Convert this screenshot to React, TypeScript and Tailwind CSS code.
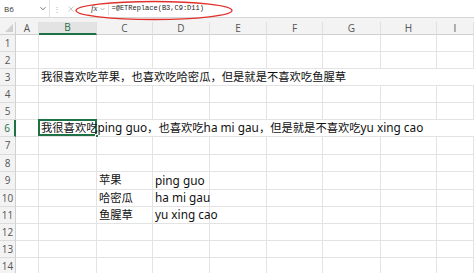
const cols = ['A', 'B', 'C', 'D', 'E', 'F', 'G', 'H', 'I'];
const rowHeights = ['h-[17px]', 'h-[17px]', 'h-[17px]', 'h-[17px]', 'h-[17px]', 'h-[17px]', 'h-[18px]', 'h-[17px]', 'h-[18px]', 'h-[17px]', 'h-[17px]', 'h-[17px]', 'h-[17px]', 'h-[17px]'];

const cjk = { fontFamily: '"Noto Sans", "Noto Sans CJK SC", sans-serif' };

const lookup: Record<number, [string, string]> = {
  9: ['苹果', 'ping guo'],
  10: ['哈密瓜', 'ha mi gau'],
  11: ['鱼腥草', 'yu xing cao'],
};

function Lat({ children }: { children: React.ReactNode }) {
  return <span className="text-[11.8px]">{children}</span>;
}

function RowHead({ n, h }: { n: number; h: string }) {
  const active = n === 6;
  return (
    <div
      className={`${h} flex items-center justify-center bg-[#f3f3f3] text-[10px] border-b border-[#dcdcdc] ${
        active ? 'text-[#1e7145] border-r-2 border-r-[#1e7145] bg-[#e3e3e3]' : 'text-[#555] border-r border-r-[#d0d0d0]'
      }`}
      style={{ fontFamily: '"Open Sans", "Noto Sans", sans-serif' }}
    >
      {n}
    </div>
  );
}

function Cell({ h, children, className = '' }: { h: string; children?: React.ReactNode; className?: string }) {
  return (
    <div className={`${h} border-r border-b border-[#e3e3e3] flex items-center pl-[2px] whitespace-nowrap text-[11.3px] text-[#111] ${className}`} style={cjk}>
      {children}
    </div>
  );
}

export default function App() {
  return (
    <div className="w-[474px] h-[273px] overflow-hidden bg-white relative">
      {/* formula bar */}
      <div className="h-[18px] flex items-center bg-white border-b border-[#d6d6d6]">
        <div className="w-[50px] h-full flex items-center justify-between pl-[4px] pr-[3px] border-r border-[#e0e0e0]">
          <span className="text-[8px] text-[#333]" style={{ fontFamily: '"Open Sans", sans-serif' }}>B6</span>
          <svg width="6" height="5" viewBox="0 0 6 5"><path d="M0.5 1.2 L3 3.8 L5.5 1.2" fill="none" stroke="#666" strokeWidth="0.9" /></svg>
        </div>
        <span className="ml-[3px] text-[8px] text-[#aaa] leading-none">⋮</span>
        <svg className="ml-[7px]" width="6" height="6" viewBox="0 0 6 6"><path d="M0.5 0.5 L5.5 5.5 M5.5 0.5 L0.5 5.5" stroke="#bbb" strokeWidth="0.8" /></svg>
        <span className="ml-[17px] text-[9px] italic text-[#444]" style={{ fontFamily: '"Liberation Serif", serif' }}>fx</span>
        <svg className="ml-[2px]" width="5" height="4" viewBox="0 0 5 4"><path d="M0.5 1 L2.5 3 L4.5 1" fill="none" stroke="#999" strokeWidth="0.7" /></svg>
        <div className="ml-[3px] h-[12px] border-l border-[#e0e0e0]" />
        <span className="ml-[3px] text-[7px] text-[#222]" style={{ fontFamily: '"Liberation Mono", monospace' }}>=@ETReplace(B3,C9:D11)</span>
      </div>
      <div className="h-[4px] bg-[#f3f3f3]" />

      {/* sheet */}
      <div className="grid grid-cols-[16px_23px_58px_56px_57px_57px_56px_58px_56px_1fr]">
        <div className="h-[13px] bg-[#f3f3f3] border-r border-b border-[#d0d0d0] flex items-end justify-end pr-[2px] pb-[2px]">
          <svg width="8" height="8" viewBox="0 0 8 8"><path d="M8 0 L8 8 L0 8 Z" fill="#cfcfcf" /></svg>
        </div>
        {cols.map((c) => (
          <div
            key={c}
            className={`h-[13px] flex items-center justify-center text-[10px] border-r border-r-[#e0e0e0] ${
              c === 'B' ? 'bg-[#e3e3e3] text-[#1e7145] border-b-2 border-b-[#1e7145]' : 'bg-[#f3f3f3] text-[#555] border-b border-b-[#d0d0d0]'
            }`}
            style={{ fontFamily: '"Open Sans", "Noto Sans", sans-serif' }}
          >
            {c}
          </div>
        ))}

        {rowHeights.map((h, i) => {
          const n = i + 1;
          if (n === 3) {
            return [
              <RowHead key={`h${n}`} n={n} h={h} />,
              <Cell key={`a${n}`} h={h} />,
              <Cell key={`b${n}`} h={h} className="col-span-8 border-r-0">
                我很喜欢吃苹果，也喜欢吃哈密瓜，但是就是不喜欢吃鱼腥草
              </Cell>,
            ];
          }
          if (n === 6) {
            return [
              <RowHead key={`h${n}`} n={n} h={h} />,
              <Cell key={`a${n}`} h={h} />,
              <div key={`b${n}`} className={`${h} relative border-b border-[#e3e3e3]`}>
                <div className="absolute -top-[1px] -left-[1px] right-0 bottom-0 border-2 border-[#1e7145]" />
                <div className="absolute -right-[2px] -bottom-[2px] w-[4px] h-[4px] bg-[#1e7145] border border-white" />
                <div className="relative h-full flex items-center pl-[2px] whitespace-nowrap text-[11.3px] text-[#111]" style={cjk}>
                  我很喜欢吃<Lat>ping guo</Lat>，也喜欢吃<Lat>ha mi gau</Lat>，但是就是不喜欢吃<Lat>yu xing cao</Lat>
                </div>
              </div>,
              <div key={`c${n}`} className={`${h} col-span-7 border-b border-[#e3e3e3]`} />,
            ];
          }
          const row = lookup[n];
          return [
            <RowHead key={`h${n}`} n={n} h={h} />,
            ...cols.map((c) => (
              <Cell key={`${c}${n}`} h={h}>
                {row && c === 'C' ? row[0] : row && c === 'D' ? <Lat>{row[1]}</Lat> : null}
              </Cell>
            )),
          ];
        })}
      </div>

      {/* red annotation ring */}
      <svg className="absolute left-[74px] top-[0px] pointer-events-none" width="160" height="21" viewBox="0 0 160 21">
        <ellipse cx="80" cy="10.5" rx="78" ry="9" fill="none" stroke="#e0302a" strokeWidth="1.4" />
      </svg>
    </div>
  );
}
